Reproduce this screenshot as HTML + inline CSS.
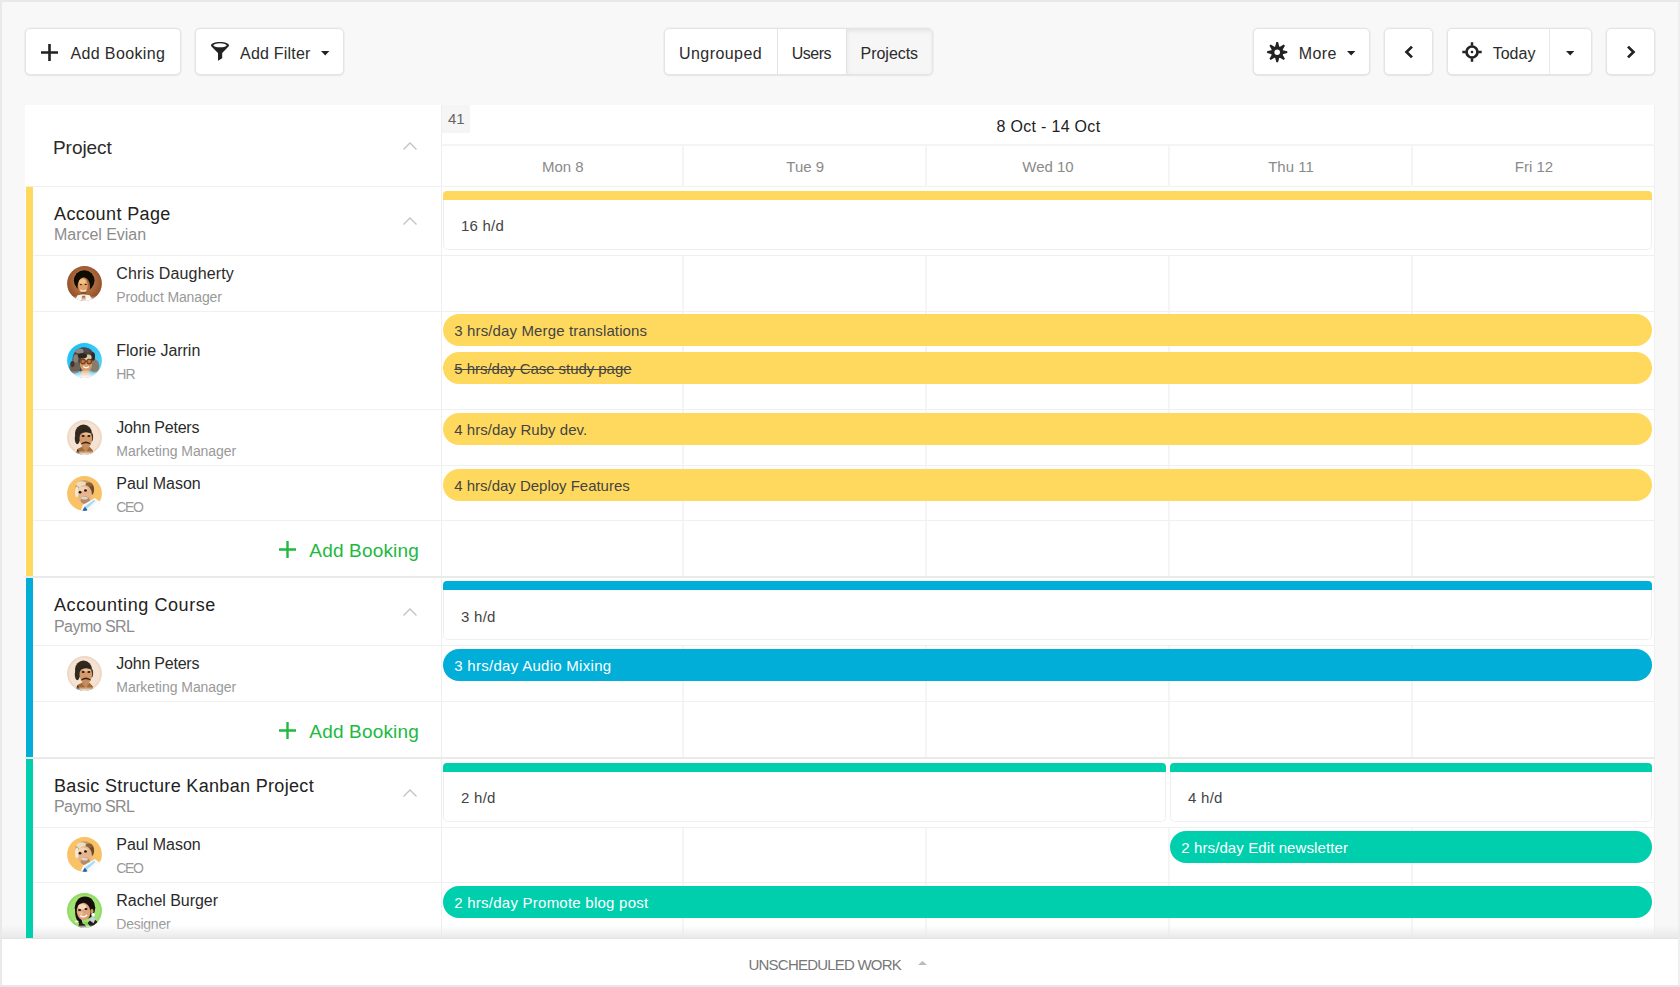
<!DOCTYPE html>
<html lang="en"><head><meta charset="utf-8"><title>Team Scheduling</title>
<style>
html,body{margin:0;padding:0}
body{width:1680px;height:987px;overflow:hidden;position:relative;background:#f8f8f8;font-family:"Liberation Sans",sans-serif;color:#333}
.t{position:absolute;white-space:nowrap}
.abs{position:absolute}
.btn{position:absolute;top:28px;height:45px;background:#fff;border:1px solid #e4e4e4;border-radius:5px;box-shadow:0 0 0 1px rgba(0,0,0,.025),0 1px 2px rgba(0,0,0,.06)}
.hl{position:absolute;height:1px;background:#f0f0f0}
.vl{position:absolute;width:1px;background:#f2f2f2}
.bar{position:absolute;height:32px;border-radius:16px}
.card{position:absolute;background:#fff;border:1px solid #efefef;border-top:none;border-radius:0 0 5px 5px;box-sizing:border-box}
.strip{position:absolute;height:9px;border-radius:4px 4px 0 0}
.av{position:absolute;width:35px;height:35px;border-radius:50%;overflow:hidden}
svg{position:absolute;overflow:visible}
</style></head><body>
<div class="abs" style="left:0;top:0;width:1680px;height:2px;background:#e9e9e9"></div>
<div class="abs" style="left:0;top:0;width:2px;height:987px;background:#e9e9e9"></div>
<div class="abs" style="left:1678px;top:2px;width:2px;height:985px;background:#efefef"></div>
<!-- toolbar -->
<div class="btn" style="left:25px;width:154px;"></div>
<svg style="left:40.5px;top:43.5px" width="17" height="17" viewBox="0 0 17 17"><path d="M8.5 0v17M0 8.500h17" stroke="#222" stroke-width="2.6" fill="none"/></svg>
<div class="t" style="left:70.50px;top:46px;font-size:16px;line-height:16px;color:#2b2b2b;letter-spacing:0.36px;">Add Booking</div>
<div class="btn" style="left:195px;width:147px;"></div>
<svg style="left:211px;top:42px" width="18" height="19" viewBox="0 0 18 19"><path d="M0 3.300C0 1.500 4 0 9 0s9 1.500 9 3.300c0 .7-.5 1.200-1 1.800L11.200 11v5.300L7 18.800V11L1 5.100C.5 4.500 0 4 0 3.300z" fill="#222"/><ellipse cx="9" cy="3.300" rx="6.700" ry="2" fill="#fff"/></svg>
<div class="t" style="left:240.00px;top:46px;font-size:16px;line-height:16px;color:#2b2b2b;letter-spacing:0.22px;">Add Filter</div>
<svg style="left:320.8px;top:51.0px" width="8.4" height="4.4" viewBox="0 0 8.4 4.4"><path d="M0 0h8.4L4.2 4.4z" fill="#222"/></svg>
<div class="btn" style="left:664px;width:267px;overflow:hidden"><div class="abs" style="left:112px;top:0;width:1px;height:45px;background:#e3e3e3"></div><div class="abs" style="left:181px;top:0;width:1px;height:45px;background:#e3e3e3"></div><div class="abs" style="left:182px;top:0;width:86px;height:45px;background:#f6f6f6;box-shadow:inset 0 2px 4px rgba(0,0,0,.08)"></div></div>
<div class="t" style="left:679.00px;top:46px;font-size:16px;line-height:16px;color:#2b2b2b;letter-spacing:0.43px;">Ungrouped</div>
<div class="t" style="left:791.80px;top:46px;font-size:16px;line-height:16px;color:#2b2b2b;letter-spacing:-0.52px;">Users</div>
<div class="t" style="left:860.60px;top:46px;font-size:16px;line-height:16px;color:#2b2b2b;letter-spacing:-0.04px;">Projects</div>
<div class="btn" style="left:1253px;width:115px;"></div>
<svg style="left:1267px;top:42px" width="20.4" height="20.4" viewBox="-10.2 -10.2 20.4 20.4"><g fill="#222"><path d="M-2.300 -4.500L-0.900 -10.100h1.800L2.300 -4.500z" transform="rotate(0)"/><path d="M-2.300 -4.500L-0.900 -10.100h1.800L2.300 -4.500z" transform="rotate(45)"/><path d="M-2.300 -4.500L-0.900 -10.100h1.800L2.300 -4.500z" transform="rotate(90)"/><path d="M-2.300 -4.500L-0.900 -10.100h1.800L2.300 -4.500z" transform="rotate(135)"/><path d="M-2.300 -4.500L-0.900 -10.100h1.800L2.300 -4.500z" transform="rotate(180)"/><path d="M-2.300 -4.500L-0.900 -10.100h1.800L2.300 -4.500z" transform="rotate(225)"/><path d="M-2.300 -4.500L-0.900 -10.100h1.800L2.300 -4.500z" transform="rotate(270)"/><path d="M-2.300 -4.500L-0.900 -10.100h1.800L2.300 -4.500z" transform="rotate(315)"/></g><circle r="4.400" fill="none" stroke="#222" stroke-width="3.200"/></svg>
<div class="t" style="left:1298.80px;top:46px;font-size:16px;line-height:16px;color:#2b2b2b;letter-spacing:0.39px;">More</div>
<svg style="left:1347.1px;top:51.0px" width="8.4" height="4.4" viewBox="0 0 8.4 4.4"><path d="M0 0h8.4L4.2 4.4z" fill="#222"/></svg>
<div class="btn" style="left:1384px;width:47px;"></div>
<svg style="left:1403px;top:45px" width="12" height="14" viewBox="0 0 12 14"><path d="M9 1.600L3.500 7l5.500 5.400" stroke="#222" stroke-width="2.700" fill="none"/></svg>
<div class="btn" style="left:1447px;width:143px;"></div>
<div class="abs" style="left:1549px;top:29px;width:1px;height:45px;background:#e8e8e8"></div>
<svg style="left:1461.600px;top:42.100px" width="20" height="20" viewBox="-10 -10 20 20"><circle r="5.500" fill="none" stroke="#222" stroke-width="2.700"/><circle r="1.300" fill="#222"/><path d="M0-9.700v3.500M0 9.700v-3.500M-9.700 0h3.500M9.700 0h-3.500" stroke="#222" stroke-width="2.500"/></svg>
<div class="t" style="left:1492.70px;top:46px;font-size:16px;line-height:16px;color:#2b2b2b;letter-spacing:-0.00px;">Today</div>
<svg style="left:1565.8px;top:51.0px" width="8.4" height="4.4" viewBox="0 0 8.4 4.4"><path d="M0 0h8.4L4.2 4.4z" fill="#222"/></svg>
<div class="btn" style="left:1606px;width:47px;"></div>
<svg style="left:1624.500px;top:45px" width="12" height="14" viewBox="0 0 12 14"><path d="M3 1.600L8.500 7l-5.500 5.400" stroke="#222" stroke-width="2.700" fill="none"/></svg>
<!-- panel -->
<div class="abs" style="left:25px;top:105px;width:1630px;height:840px;background:#fff"></div>
<div class="abs" style="left:1654px;top:105px;width:1px;height:840px;background:#f0f0f0"></div>
<div class="t" style="left:53.00px;top:138px;font-size:19px;line-height:19px;color:#2b2b2b;letter-spacing:-0.06px;">Project</div>
<svg style="left:402.5px;top:142px" width="14" height="8" viewBox="0 0 14 8"><path d="M0.500 7.500L7 1l6.500 6.500" stroke="#c2c2c2" stroke-width="1.300" fill="none"/></svg>
<div class="abs" style="left:442px;top:105px;width:28px;height:28px;background:#f5f5f5"></div>
<div class="t" style="left:448.00px;top:111px;font-size:15px;line-height:15px;color:#666;">41</div>
<div class="t" style="left:996.50px;top:119px;font-size:16px;line-height:16px;color:#222;letter-spacing:0.31px;">8 Oct - 14 Oct</div>
<div class="t" style="left:541.90px;top:159px;font-size:15px;line-height:15px;color:#8a8a8a;">Mon 8</div>
<div class="t" style="left:786.34px;top:159px;font-size:15px;line-height:15px;color:#8a8a8a;">Tue 9</div>
<div class="t" style="left:1022.28px;top:159px;font-size:15px;line-height:15px;color:#8a8a8a;">Wed 10</div>
<div class="t" style="left:1268.20px;top:159px;font-size:15px;line-height:15px;color:#8a8a8a;">Thu 11</div>
<div class="t" style="left:1514.83px;top:159px;font-size:15px;line-height:15px;color:#8a8a8a;">Fri 12</div>
<div class="hl" style="left:441px;top:144px;width:1214px;height:2px;background:#f4f4f4"></div>
<div class="hl" style="left:25px;top:186px;width:1630px"></div>
<div class="vl" style="left:441px;top:105px;height:840px;background:#efefef"></div>
<div class="vl" style="left:682px;top:146px;height:800px;width:2px;background:#f5f5f5"></div>
<div class="vl" style="left:925px;top:146px;height:800px;width:2px;background:#f5f5f5"></div>
<div class="vl" style="left:1168px;top:146px;height:800px;width:2px;background:#f5f5f5"></div>
<div class="vl" style="left:1411px;top:146px;height:800px;width:2px;background:#f5f5f5"></div>
<svg width="0" height="0" style="left:0;top:0"><defs><clipPath id="avc"><circle cx="17.500" cy="17.500" r="17.400"/></clipPath><filter id="avb" x="-10%" y="-10%" width="120%" height="120%"><feGaussianBlur stdDeviation="0.450"/></filter><radialGradient id="gch" cx="50%" cy="45%" r="55%"><stop offset="0.550" stop-color="#ad6a3d"/><stop offset="1" stop-color="#8f4d28"/></radialGradient><linearGradient id="gfl" x1="0" y1="0" x2="1" y2="1"><stop offset="0" stop-color="#0fbef5"/><stop offset="1" stop-color="#63d4f8"/></linearGradient><linearGradient id="gwf" x1="0" y1="0" x2="0" y2="1"><stop offset="0" stop-color="#fff" stop-opacity="0"/><stop offset="1" stop-color="#fff" stop-opacity="1"/></linearGradient></defs></svg>
<!-- project 1 -->
<div class="abs" style="left:26px;top:187px;width:7px;height:390px;background:#ffd95e"></div>
<div class="abs" style="left:442px;top:187px;width:1212px;height:68px;background:#fff"></div>
<div class="t" style="left:54.00px;top:205px;font-size:18px;line-height:18px;color:#222;letter-spacing:0.39px;">Account Page</div>
<div class="t" style="left:54.00px;top:227px;font-size:16px;line-height:16px;color:#8c8c8c;letter-spacing:-0.04px;">Marcel Evian</div>
<svg style="left:402.5px;top:217px" width="14" height="8" viewBox="0 0 14 8"><path d="M0.500 7.500L7 1l6.500 6.500" stroke="#c2c2c2" stroke-width="1.300" fill="none"/></svg>
<div class="strip" style="left:443px;top:191px;width:1209px;background:#ffd95e"></div>
<div class="card" style="left:443px;top:200px;width:1209px;height:50px"></div>
<div class="t" style="left:461.00px;top:218px;font-size:15px;line-height:15px;color:#444;letter-spacing:0.22px;">16 h/d</div>
<div class="hl" style="left:33px;top:255px;width:1622px"></div>
<svg style="left:67px;top:266.0px" width="35" height="35" viewBox="0 0 35 35"><g clip-path="url(#avc)"><rect width="35" height="35" fill="url(#gch)"/><g filter="url(#avb)"><circle cx="17.200" cy="14.600" r="10.300" fill="#0b0706"/><ellipse cx="16.800" cy="20.500" rx="6.300" ry="9.300" fill="#a9683a"/><ellipse cx="15.900" cy="19.500" rx="4.800" ry="7.600" fill="#dfa469"/><ellipse cx="15.600" cy="15.500" rx="3.300" ry="2.200" fill="#f1c48a"/><path d="M13.300 23.300q3 2.600 6.200 0l-.5 1.700q-2.600 1.600-5.200 0z" fill="#fbf3ea"/><ellipse cx="16.500" cy="27.300" rx="3" ry="1.600" fill="#8a4f28"/><path d="M7.500 35l3-5.800 5.500-1 6.800 1 3.200 5.800z" fill="#f5f1ec"/><path d="M15.200 29.800h2.900l1.100 5.200h-5.100z" fill="#a85a2a"/><ellipse cx="13.900" cy="18.600" rx="1.100" ry=".7" fill="#3a2010"/><ellipse cx="18.700" cy="18.400" rx="1.100" ry=".7" fill="#3a2010"/></g><rect y="30" width="35" height="5" fill="url(#gwf)"/></g></svg>
<div class="t" style="left:116.30px;top:266px;font-size:16px;line-height:16px;color:#2b2b2b;letter-spacing:0.13px;">Chris Daugherty</div>
<div class="t" style="left:116.30px;top:290px;font-size:14px;line-height:14px;color:#999;letter-spacing:-0.13px;">Product Manager</div>
<div class="hl" style="left:33px;top:311px;width:1622px"></div>
<svg style="left:67px;top:342.8px" width="35" height="35" viewBox="0 0 35 35"><g clip-path="url(#avc)"><rect width="35" height="35" fill="url(#gfl)"/><g filter="url(#avb)"><ellipse cx="16.800" cy="16.500" rx="11.300" ry="12.300" fill="#4d433b"/><ellipse cx="7.800" cy="24" rx="5.500" ry="6.800" fill="#6f6357"/><ellipse cx="27.300" cy="23" rx="5" ry="6.800" fill="#8a7b6a"/><ellipse cx="12.500" cy="8" rx="4.500" ry="2.400" fill="#8d8883"/><ellipse cx="19.500" cy="7" rx="3.500" ry="1.900" fill="#4b4c5c"/><ellipse cx="8.800" cy="15.500" rx="2.600" ry="4.300" fill="#8a8076"/><ellipse cx="26" cy="13.500" rx="2" ry="4.200" fill="#332c28"/><ellipse cx="5.500" cy="21" rx="2" ry="3" fill="#3c342f"/><ellipse cx="19" cy="20.800" rx="6.100" ry="7.900" fill="#d99c6d"/><ellipse cx="21" cy="14.300" rx="3.600" ry="2.800" fill="#dcc8ab"/><ellipse cx="15.500" cy="12.800" rx="4.600" ry="2.600" fill="#2b2623"/><circle cx="16" cy="18.600" r="2.300" fill="#b87a45" stroke="#6e3a18" stroke-width="1.100"/><circle cx="22.200" cy="18.600" r="2.300" fill="#b87a45" stroke="#6e3a18" stroke-width="1.100"/><path d="M18.300 18.300h1.600" stroke="#6e3a18" stroke-width="1.100"/><path d="M16.300 23.600q3 2.400 5.600 0" stroke="#fff" stroke-width="1.300" fill="none"/><path d="M14.500 27.500h7.500l2 7.500h-11z" fill="#e6ba91"/></g><rect y="27.500" width="35" height="7.500" fill="url(#gwf)"/></g></svg>
<div class="t" style="left:116.30px;top:343px;font-size:16px;line-height:16px;color:#2b2b2b;letter-spacing:-0.04px;">Florie Jarrin</div>
<div class="t" style="left:116.30px;top:367px;font-size:14px;line-height:14px;color:#999;letter-spacing:-1.02px;">HR</div>
<div class="bar" style="left:443px;top:314px;width:1209px;background:#ffd95e"></div>
<div class="t" style="left:454.30px;top:323px;font-size:15px;line-height:15px;color:#444;letter-spacing:0.13px;">3 hrs/day Merge translations</div>
<div class="bar" style="left:443px;top:352px;width:1209px;background:#ffd95e"></div>
<div class="t" style="left:454.30px;top:361px;font-size:15px;line-height:15px;color:#444;letter-spacing:-0.05px;text-decoration:line-through;">5 hrs/day Case study page</div>
<div class="hl" style="left:33px;top:409px;width:1622px"></div>
<svg style="left:67px;top:420.0px" width="35" height="35" viewBox="0 0 35 35"><g clip-path="url(#avc)"><rect width="35" height="35" fill="#f5e2d3"/><circle cx="17.500" cy="17.500" r="16.500" fill="none" stroke="#f0d8c6" stroke-width="2"/><g filter="url(#avb)"><ellipse cx="16.500" cy="13.300" rx="8.500" ry="8.700" fill="#33291f"/><ellipse cx="10.300" cy="18.500" rx="2.500" ry="5.800" fill="#33291f"/><ellipse cx="24.300" cy="17" rx="1.800" ry="4.500" fill="#4a3628"/><ellipse cx="18.800" cy="18.800" rx="6.300" ry="8.700" fill="#d39a6b"/><ellipse cx="20" cy="13.200" rx="4.300" ry="2.400" fill="#e9bd92"/><path d="M12.500 12.500q4.500-6 11-2l1 3.300q-5.500-3.300-11 0z" fill="#2f261f"/><ellipse cx="16.200" cy="16" rx="1.500" ry=".9" fill="#2a1a10"/><ellipse cx="21.900" cy="16" rx="1.500" ry=".9" fill="#2a1a10"/><path d="M14.700 22.900q4.200-3 8.400 0l.9 1.500q-5.100-1.800-10.200 0z" fill="#3a2517"/><ellipse cx="19" cy="25.500" rx="3.600" ry="2" fill="#c78d5f"/><path d="M7.500 35l3.300-6.300 5.200-2.500 3 3.800 3.500-3.300 3.300 3.600 1.200 4.700z" fill="#a26a34"/><path d="M14.800 27.300l4.200 5.200 3.200-5.400z" fill="#c58958"/><path d="M10.500 29l3.500 6h-5z" fill="#2c2018"/></g><rect y="30.500" width="35" height="4.500" fill="url(#gwf)"/></g></svg>
<div class="t" style="left:116.30px;top:420px;font-size:16px;line-height:16px;color:#2b2b2b;letter-spacing:-0.22px;">John Peters</div>
<div class="t" style="left:116.30px;top:444px;font-size:14px;line-height:14px;color:#999;letter-spacing:-0.04px;">Marketing Manager</div>
<div class="bar" style="left:443px;top:413px;width:1209px;background:#ffd95e"></div>
<div class="t" style="left:454.30px;top:422px;font-size:15px;line-height:15px;color:#444;letter-spacing:0.03px;">4 hrs/day Ruby dev.</div>
<div class="hl" style="left:33px;top:465px;width:1622px"></div>
<svg style="left:67px;top:476.0px" width="35" height="35" viewBox="0 0 35 35"><g clip-path="url(#avc)"><rect width="35" height="35" fill="#f9c267"/><g filter="url(#avb)"><ellipse cx="17.300" cy="11.500" rx="9" ry="7.200" fill="#c69a69"/><ellipse cx="14.500" cy="8.300" rx="5.200" ry="3" fill="#ecdcc0"/><ellipse cx="24.300" cy="13.500" rx="2.800" ry="5.500" fill="#6b4a2c"/><ellipse cx="22" cy="8.800" rx="3.500" ry="2.200" fill="#8a6238"/><ellipse cx="17.700" cy="18.300" rx="7.200" ry="9.300" fill="#e7b48b"/><ellipse cx="16" cy="12.800" rx="4.500" ry="2.200" fill="#f3d3b3"/><ellipse cx="9.900" cy="16" rx="1.800" ry="5.200" fill="#f4e9d6"/><ellipse cx="13" cy="16.200" rx="1.400" ry="1.200" fill="#1c1410"/><ellipse cx="18.500" cy="14.400" rx="1.400" ry="1.200" fill="#1c1410"/><ellipse cx="18.300" cy="24.300" rx="4.600" ry="3.700" fill="#b58a65"/><ellipse cx="17.600" cy="22.200" rx="3.200" ry="1.400" fill="#dcd5cb"/><path d="M13.500 35l2.500-6.200 12-6.800 5.500 4.500-2 8.500z" fill="#f6f8fb"/><path d="M18 30.200l9.200-6.400 1.300 1.300-8.700 7.700z" fill="#a6dbf3"/><path d="M15.300 34.800l2.500-4.300 2.600 3.200-1 1.300z" fill="#2a64b2"/></g><path d="M21 35l14-12.500v12.500z" fill="#fff" opacity=".9"/><path d="M9 35l6-3.500 6 3.500z" fill="#fff" opacity=".0"/></g></svg>
<div class="t" style="left:116.30px;top:476px;font-size:16px;line-height:16px;color:#2b2b2b;letter-spacing:-0.01px;">Paul Mason</div>
<div class="t" style="left:116.30px;top:500px;font-size:14px;line-height:14px;color:#999;letter-spacing:-1.40px;">CEO</div>
<div class="bar" style="left:443px;top:469px;width:1209px;background:#ffd95e"></div>
<div class="t" style="left:454.30px;top:478px;font-size:15px;line-height:15px;color:#444;letter-spacing:-0.02px;">4 hrs/day Deploy Features</div>
<div class="hl" style="left:33px;top:520px;width:1622px"></div>
<svg style="left:279px;top:540.5px" width="17" height="17" viewBox="0 0 17 17"><path d="M8.500 0v17M0 8.500h17" stroke="#22b93f" stroke-width="2.400" fill="none"/></svg>
<div class="t" style="left:309.30px;top:541px;font-size:19px;line-height:19px;color:#22b93f;letter-spacing:0.17px;">Add Booking</div>
<!-- project 2 -->
<div class="abs" style="left:26px;top:578px;width:7px;height:180px;background:#00aed7"></div>
<div class="abs" style="left:442px;top:577px;width:1212px;height:68px;background:#fff"></div>
<div class="t" style="left:54.00px;top:596px;font-size:18px;line-height:18px;color:#222;letter-spacing:0.58px;">Accounting Course</div>
<div class="t" style="left:54.00px;top:619px;font-size:16px;line-height:16px;color:#8c8c8c;letter-spacing:-0.55px;">Paymo SRL</div>
<svg style="left:402.5px;top:608px" width="14" height="8" viewBox="0 0 14 8"><path d="M0.500 7.500L7 1l6.500 6.500" stroke="#c2c2c2" stroke-width="1.300" fill="none"/></svg>
<div class="strip" style="left:443px;top:581px;width:1209px;background:#00aed7"></div>
<div class="card" style="left:443px;top:590px;width:1209px;height:50px"></div>
<div class="t" style="left:461.00px;top:609px;font-size:15px;line-height:15px;color:#444;letter-spacing:0.26px;">3 h/d</div>
<div class="hl" style="left:33px;top:645px;width:1622px"></div>
<div class="abs" style="left:25px;top:576px;width:1630px;height:2px;background:#eaeaea"></div>
<svg style="left:67px;top:656.0px" width="35" height="35" viewBox="0 0 35 35"><g clip-path="url(#avc)"><rect width="35" height="35" fill="#f5e2d3"/><circle cx="17.500" cy="17.500" r="16.500" fill="none" stroke="#f0d8c6" stroke-width="2"/><g filter="url(#avb)"><ellipse cx="16.500" cy="13.300" rx="8.500" ry="8.700" fill="#33291f"/><ellipse cx="10.300" cy="18.500" rx="2.500" ry="5.800" fill="#33291f"/><ellipse cx="24.300" cy="17" rx="1.800" ry="4.500" fill="#4a3628"/><ellipse cx="18.800" cy="18.800" rx="6.300" ry="8.700" fill="#d39a6b"/><ellipse cx="20" cy="13.200" rx="4.300" ry="2.400" fill="#e9bd92"/><path d="M12.500 12.500q4.500-6 11-2l1 3.300q-5.500-3.300-11 0z" fill="#2f261f"/><ellipse cx="16.200" cy="16" rx="1.500" ry=".9" fill="#2a1a10"/><ellipse cx="21.900" cy="16" rx="1.500" ry=".9" fill="#2a1a10"/><path d="M14.700 22.900q4.200-3 8.400 0l.9 1.500q-5.100-1.800-10.200 0z" fill="#3a2517"/><ellipse cx="19" cy="25.500" rx="3.600" ry="2" fill="#c78d5f"/><path d="M7.500 35l3.300-6.300 5.200-2.500 3 3.800 3.500-3.300 3.300 3.600 1.200 4.700z" fill="#a26a34"/><path d="M14.800 27.300l4.200 5.200 3.200-5.400z" fill="#c58958"/><path d="M10.500 29l3.500 6h-5z" fill="#2c2018"/></g><rect y="30.500" width="35" height="4.500" fill="url(#gwf)"/></g></svg>
<div class="t" style="left:116.30px;top:656px;font-size:16px;line-height:16px;color:#2b2b2b;letter-spacing:-0.22px;">John Peters</div>
<div class="t" style="left:116.30px;top:680px;font-size:14px;line-height:14px;color:#999;letter-spacing:-0.04px;">Marketing Manager</div>
<div class="bar" style="left:443px;top:649px;width:1209px;background:#00aed7"></div>
<div class="t" style="left:454.30px;top:658px;font-size:15px;line-height:15px;color:#fff;letter-spacing:0.28px;">3 hrs/day Audio Mixing</div>
<div class="hl" style="left:33px;top:701px;width:1622px"></div>
<svg style="left:279px;top:721.5px" width="17" height="17" viewBox="0 0 17 17"><path d="M8.500 0v17M0 8.500h17" stroke="#22b93f" stroke-width="2.400" fill="none"/></svg>
<div class="t" style="left:309.30px;top:722px;font-size:19px;line-height:19px;color:#22b93f;letter-spacing:0.17px;">Add Booking</div>
<div class="abs" style="left:25px;top:757px;width:1630px;height:2px;background:#eaeaea"></div>
<!-- project 3 -->
<div class="abs" style="left:26px;top:759px;width:7px;height:186px;background:#00cfae"></div>
<div class="abs" style="left:442px;top:759px;width:1212px;height:68px;background:#fff"></div>
<div class="t" style="left:54.00px;top:777px;font-size:18px;line-height:18px;color:#222;letter-spacing:0.33px;">Basic Structure Kanban Project</div>
<div class="t" style="left:54.00px;top:799px;font-size:16px;line-height:16px;color:#8c8c8c;letter-spacing:-0.55px;">Paymo SRL</div>
<svg style="left:402.5px;top:789px" width="14" height="8" viewBox="0 0 14 8"><path d="M0.500 7.500L7 1l6.500 6.500" stroke="#c2c2c2" stroke-width="1.300" fill="none"/></svg>
<div class="strip" style="left:443px;top:763px;width:723px;background:#00cfae"></div>
<div class="card" style="left:443px;top:772px;width:723px;height:50px"></div>
<div class="t" style="left:461.00px;top:790px;font-size:15px;line-height:15px;color:#444;letter-spacing:0.26px;">2 h/d</div>
<div class="strip" style="left:1170px;top:763px;width:482px;background:#00cfae"></div>
<div class="card" style="left:1170px;top:772px;width:482px;height:50px"></div>
<div class="t" style="left:1188.00px;top:790px;font-size:15px;line-height:15px;color:#444;letter-spacing:0.26px;">4 h/d</div>
<div class="hl" style="left:33px;top:827px;width:1622px"></div>
<svg style="left:67px;top:837.0px" width="35" height="35" viewBox="0 0 35 35"><g clip-path="url(#avc)"><rect width="35" height="35" fill="#f9c267"/><g filter="url(#avb)"><ellipse cx="17.300" cy="11.500" rx="9" ry="7.200" fill="#c69a69"/><ellipse cx="14.500" cy="8.300" rx="5.200" ry="3" fill="#ecdcc0"/><ellipse cx="24.300" cy="13.500" rx="2.800" ry="5.500" fill="#6b4a2c"/><ellipse cx="22" cy="8.800" rx="3.500" ry="2.200" fill="#8a6238"/><ellipse cx="17.700" cy="18.300" rx="7.200" ry="9.300" fill="#e7b48b"/><ellipse cx="16" cy="12.800" rx="4.500" ry="2.200" fill="#f3d3b3"/><ellipse cx="9.900" cy="16" rx="1.800" ry="5.200" fill="#f4e9d6"/><ellipse cx="13" cy="16.200" rx="1.400" ry="1.200" fill="#1c1410"/><ellipse cx="18.500" cy="14.400" rx="1.400" ry="1.200" fill="#1c1410"/><ellipse cx="18.300" cy="24.300" rx="4.600" ry="3.700" fill="#b58a65"/><ellipse cx="17.600" cy="22.200" rx="3.200" ry="1.400" fill="#dcd5cb"/><path d="M13.500 35l2.500-6.200 12-6.800 5.500 4.500-2 8.500z" fill="#f6f8fb"/><path d="M18 30.200l9.200-6.400 1.300 1.300-8.700 7.700z" fill="#a6dbf3"/><path d="M15.300 34.800l2.500-4.300 2.600 3.200-1 1.300z" fill="#2a64b2"/></g><path d="M21 35l14-12.500v12.500z" fill="#fff" opacity=".9"/><path d="M9 35l6-3.500 6 3.500z" fill="#fff" opacity=".0"/></g></svg>
<div class="t" style="left:116.30px;top:837px;font-size:16px;line-height:16px;color:#2b2b2b;letter-spacing:-0.01px;">Paul Mason</div>
<div class="t" style="left:116.30px;top:861px;font-size:14px;line-height:14px;color:#999;letter-spacing:-1.40px;">CEO</div>
<div class="bar" style="left:1170px;top:831px;width:482px;background:#00cfae"></div>
<div class="t" style="left:1181.30px;top:840px;font-size:15px;line-height:15px;color:#fff;letter-spacing:0.10px;">2 hrs/day Edit newsletter</div>
<div class="hl" style="left:33px;top:882px;width:1622px"></div>
<svg style="left:67px;top:893.0px" width="35" height="35" viewBox="0 0 35 35"><g clip-path="url(#avc)"><rect width="35" height="35" fill="#a1e272"/><circle cx="17.500" cy="17.500" r="16.500" fill="none" stroke="#90dc68" stroke-width="2"/><g filter="url(#avb)"><ellipse cx="18" cy="14.800" rx="10.300" ry="11.300" fill="#17110f"/><path d="M8.300 17q-1 8 4 13.500l3.500 1-3-12.500z" fill="#17110f"/><ellipse cx="16.600" cy="18.600" rx="6.900" ry="8.800" fill="#dfa178" transform="rotate(-8 16.600 18.600)"/><ellipse cx="15.300" cy="13.700" rx="4.200" ry="2.700" fill="#f5d8bd"/><ellipse cx="14" cy="20.500" rx="2.500" ry="2" fill="#edb992"/><ellipse cx="12.600" cy="17" rx="1.500" ry="1" fill="#20140f"/><ellipse cx="19" cy="16" rx="1.500" ry="1" fill="#20140f"/><path d="M13.300 22.600q3.200 2.700 6.800-.6" stroke="#fff" stroke-width="1.500" fill="none"/><ellipse cx="25" cy="18.300" rx="1.500" ry="2.600" fill="#cf946b"/><circle cx="26.100" cy="21.800" r="1.800" fill="#fff"/><path d="M11 35l1.500-6.300 4 2.300 4-1 5.200-5.200 5 4.200-1 6z" fill="#2a1f1f"/><path d="M22.300 27l3-3.200 3.200 2.200-2 4.200z" fill="#c6d2e6"/><path d="M16 29.300l3.200-1 4 5.200-3.200 1.500z" fill="#7ed956"/><ellipse cx="9.800" cy="28.600" rx="1.900" ry="1" fill="#f6f6f6"/></g><rect y="32" width="35" height="3" fill="url(#gwf)"/></g></svg>
<div class="t" style="left:116.30px;top:893px;font-size:16px;line-height:16px;color:#2b2b2b;letter-spacing:-0.05px;">Rachel Burger</div>
<div class="t" style="left:116.30px;top:917px;font-size:14px;line-height:14px;color:#999;letter-spacing:-0.25px;">Designer</div>
<div class="bar" style="left:443px;top:886px;width:1209px;background:#00cfae"></div>
<div class="t" style="left:454.30px;top:895px;font-size:15px;line-height:15px;color:#fff;letter-spacing:0.24px;">2 hrs/day Promote blog post</div>
<!-- bottom -->
<div class="abs" style="left:2px;top:925px;width:1678px;height:13px;background:linear-gradient(to bottom,rgba(238,238,238,0),rgba(232,232,232,.95))"></div>
<div class="abs" style="left:26px;top:924px;width:7px;height:14px;background:#00cfae"></div>
<div class="abs" style="left:2px;top:938px;width:1676px;height:47px;background:#fff;border-top:1px solid #e4e4e4;box-sizing:border-box"></div>
<div class="abs" style="left:0;top:985px;width:1680px;height:2px;background:#e6e6e6"></div>
<div class="t" style="left:748.50px;top:957px;font-size:15px;line-height:15px;color:#777;letter-spacing:-0.78px;">UNSCHEDULED WORK</div>
<svg style="left:918px;top:960.500px" width="9" height="4" viewBox="0 0 9 4"><path d="M0 4h9L4.500 0z" fill="#bbb"/></svg>
</body></html>
